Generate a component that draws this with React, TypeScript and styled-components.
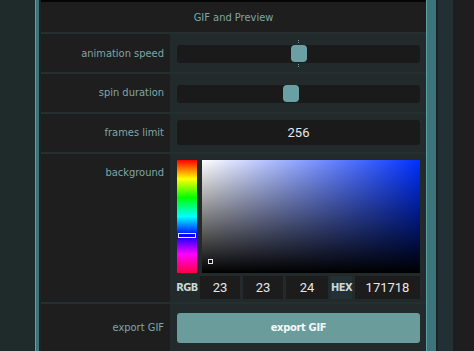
import React from 'react';
import styled, { createGlobalStyle } from 'styled-components';

const Global = createGlobalStyle`
    html, body { margin: 0; padding: 0; background: #1f2a2b; }
    body { width: 474px; height: 351px; overflow: hidden; }
`

const font = `"DejaVu Sans Condensed", "Liberation Sans Narrow", Roboto, sans-serif`

const Page = styled.div`
    display: flex;
    width: 474px;
    height: 351px;
    background: #1f2a2b;
`

const Gutter = styled.div<{ w: number; bg: string }>`
    flex: 0 0 ${p => p.w}px;
    background: ${p => p.bg};
`

const Rail = styled.div<{ w: number }>`
    flex: 0 0 ${p => p.w}px;
    background: #3b7479;
    border-left: 1px solid #5f9ea3;
    border-right: 2px solid #1b2324;
    box-sizing: border-box;
`

const Panel = styled.div`
    flex: 0 0 385px;
    display: flex;
    flex-direction: column;
    background: #1e1e1e;
    border-top: 2px solid #050505;
    font-family: ${font};
`

const Header = styled.div`
    height: 31px;
    display: flex;
    align-items: center;
    justify-content: center;
    color: #7fa6a8;
    font-size: 11px;
`

const Row = styled.div<{ h: number }>`
    display: grid;
    grid-template-columns: 129px 1fr;
    height: ${p => p.h}px;
    border-top: 2px solid #262f30;
`

const Label = styled.div<{ top?: boolean }>`
    display: flex;
    justify-content: flex-end;
    align-items: ${p => (p.top ? 'flex-start' : 'center')};
    padding: ${p => (p.top ? '12px 6px 0 0' : '0 6px 0 0')};
    color: #7fa6a8;
    font-size: 11px;
    background: #1e1e1e;
`

const Control = styled.div<{ top?: boolean }>`
    display: flex;
    flex-direction: column;
    justify-content: ${p => (p.top ? 'flex-start' : 'center')};
    padding: ${p => (p.top ? '6px 6px 0 7px' : '0 6px 0 7px')};
    background: #222a2b;
`

const Track = styled.div`
    position: relative;
    height: 18px;
    margin-top: 2px;
    background: #1a1a1a;
    border-radius: 3px;
`

const Thumb = styled.div`
    position: absolute;
    top: 0;
    width: 16px;
    height: 17px;
    margin-left: -8px;
    background: #6a9fa3;
    border-radius: 4px;
`

const Tick = styled.div<{ side: 'top' | 'bottom' }>`
    position: absolute;
    ${p => (p.side === 'top' ? 'top: -5px;' : 'bottom: -5px;')}
    width: 1px;
    height: 4px;
    margin-left: -0.5px;
    background: repeating-linear-gradient(to bottom, #6a9fa3 0 1px, transparent 1px 2px);
`

const NumberBox = styled.div`
    height: 25px;
    display: flex;
    align-items: center;
    justify-content: center;
    background: #1a1a1a;
    border-radius: 3px;
    color: #e8e8e8;
    font-family: Roboto, sans-serif;
    font-size: 13px;
`

const Picker = styled.div`
    display: flex;
    gap: 5px;
    height: 113px;
`

const HueStrip = styled.div`
    position: relative;
    flex: 0 0 20px;
    background: linear-gradient(to bottom, #ff0000, #ffff00 16.7%, #00ff00 33.3%, #00ffff 50%, #0000ff 66.7%, #ff00ff 83.3%, #ff0040);
`

const HueMarker = styled.div`
    position: absolute;
    left: 1px;
    right: 1px;
    height: 3px;
    margin-top: -2px;
    border: 1px solid #dfe6ff;
`

const SVBox = styled.div`
    position: relative;
    flex: 1;
    background: linear-gradient(to top, #000 0%, rgba(0, 0, 0, 0) 100%),
        linear-gradient(to right, #fff 0%, #0030ff 100%);
`

const SVMarker = styled.div`
    position: absolute;
    width: 3px;
    height: 3px;
    margin: -3px 0 0 -3px;
    border: 1px solid #e8e8e8;
    background: #111;
`

const ColorRow = styled.div`
    display: flex;
    gap: 3px;
    height: 23px;
    margin-top: 3px;
`

const Tag = styled.div<{ w: number; tint?: boolean }>`
    flex: 0 0 ${p => p.w}px;
    min-width: 0;
    display: flex;
    align-items: center;
    justify-content: center;
    background: ${p => (p.tint ? '#233036' : 'transparent')};
    color: #c9d8d8;
    font-weight: bold;
    font-size: 11px;
    letter-spacing: -0.6px;
`

const Field = styled.div<{ w: number }>`
    flex: ${p => (p.w ? `0 0 ${p.w}px` : '1')};
    min-width: 0;
    display: flex;
    align-items: center;
    justify-content: center;
    background: #1c1c1c;
    color: #e8e8e8;
    font-family: Roboto, sans-serif;
    font-size: 13px;
`

const Button = styled.div`
    height: 30px;
    display: flex;
    align-items: center;
    justify-content: center;
    background: #6a9c9c;
    border-radius: 3px;
    color: #f4f8f8;
    font-weight: bold;
    font-size: 11px;
    letter-spacing: -0.3px;
`

function Slider(p: { value: number; tick?: number }) {
    const pos = (v: number) => `calc(8px + (100% - 16px) * ${v})`
    return <Track>
        {p.tick !== undefined && <>
            <Tick side='top' style={{ left: pos(p.tick) }} />
            <Tick side='bottom' style={{ left: pos(p.tick) }} />
        </>}
        <Thumb style={{ left: pos(p.value) }} />
    </Track>
}

export default function App() {
    const hue = 240
    const sat = 1 / 24
    const val = 24 / 255
    return <>
        <Global />
        <Page>
            <Gutter w={35} bg='#1f2a2b' />
            <Rail w={6} />
            <Panel>
                <Header>GIF and Preview</Header>
                <Row h={39}>
                    <Label>animation speed</Label>
                    <Control><Slider value={0.5} tick={0.5} /></Control>
                </Row>
                <Row h={39}>
                    <Label>spin duration</Label>
                    <Control><Slider value={0.465} /></Control>
                </Row>
                <Row h={39}>
                    <Label>frames limit</Label>
                    <Control><NumberBox>256</NumberBox></Control>
                </Row>
                <Row h={153}>
                    <Label top>background</Label>
                    <Control top>
                        <Picker>
                            <HueStrip><HueMarker style={{ top: `${(hue / 360) * 100}%` }} /></HueStrip>
                            <SVBox><SVMarker style={{ left: `${sat * 100}%`, top: `${(1 - val) * 100}%` }} /></SVBox>
                        </Picker>
                        <ColorRow>
                            <Tag w={20}>RGB</Tag>
                            <Field w={40}>23</Field>
                            <Field w={40}>23</Field>
                            <Field w={42}>24</Field>
                            <Tag w={21} tint>HEX</Tag>
                            <Field w={0}>171718</Field>
                        </ColorRow>
                    </Control>
                </Row>
                <Row h={48}>
                    <Label>export GIF</Label>
                    <Control><Button>export GIF</Button></Control>
                </Row>
            </Panel>
            <Rail w={12} />
            <Gutter w={15} bg='#223033' />
            <Gutter w={21} bg='#1e1e20' />
        </Page>
    </>
}
